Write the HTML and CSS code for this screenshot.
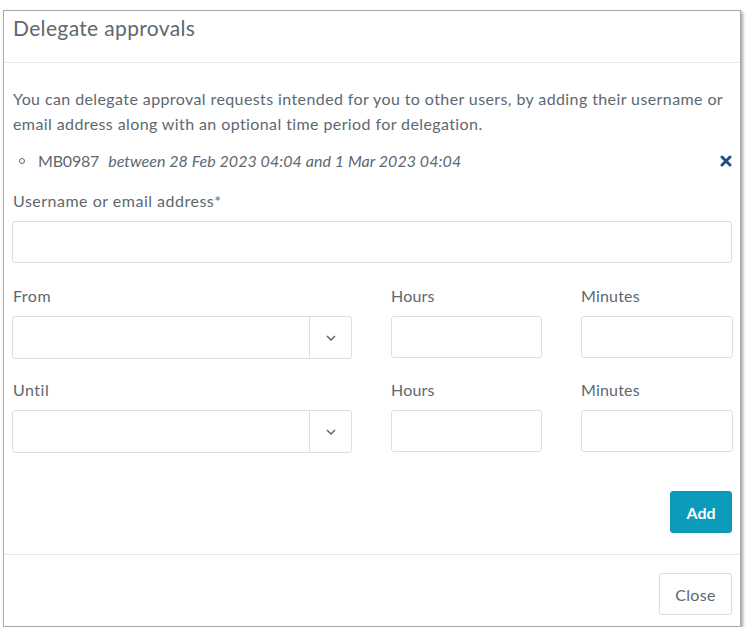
FILE: index.html
```html
<!DOCTYPE html>
<html lang="en">
<head>
<meta charset="utf-8">
<title>Delegate approvals</title>
<link rel="stylesheet" href="styles.css">
</head>
<body>
<div class="dialog">
  <div class="dialog-header">
    <h1 class="dialog-title">Delegate approvals</h1>
  </div>
  <div class="dialog-body">
    <p class="intro">You can delegate approval requests intended for you to other users, by adding their username or email address along with an optional time period for delegation.</p>
    <ul class="delegates">
      <li class="delegate">
        <span class="bullet"></span>
        <span class="user">MB0987</span>
        <em class="period">between 28 Feb 2023 04:04 and 1 Mar 2023 04:04</em>
        <button class="remove" type="button" aria-label="Remove">
          <svg width="12" height="12" viewBox="0 0 12 12"><path d="M2 2 L10 10 M10 2 L2 10" stroke="#1d4f8a" stroke-width="3" stroke-linecap="round"/></svg>
        </button>
      </li>
    </ul>
    <label class="label">Username or email address*</label>
    <input class="field" type="text">

    <div class="time-grid">
      <label class="label">From</label>
      <label class="label label-col">Hours</label>
      <label class="label label-col">Minutes</label>
      <div class="select">
        <div class="select-value"></div>
        <div class="select-toggle">
          <svg width="10" height="6" viewBox="0 0 10 6"><path d="M1 1 L5 5 L9 1" fill="none" stroke="#5d6870" stroke-width="1.5"/></svg>
        </div>
      </div>
      <input class="field" type="text">
      <input class="field" type="text">

      <label class="label">Until</label>
      <label class="label label-col">Hours</label>
      <label class="label label-col">Minutes</label>
      <div class="select">
        <div class="select-value"></div>
        <div class="select-toggle">
          <svg width="10" height="6" viewBox="0 0 10 6"><path d="M1 1 L5 5 L9 1" fill="none" stroke="#5d6870" stroke-width="1.5"/></svg>
        </div>
      </div>
      <input class="field" type="text">
      <input class="field" type="text">
    </div>

    <div class="actions">
      <button class="btn btn-primary" type="button">Add</button>
    </div>
  </div>
  <div class="dialog-footer">
    <button class="btn btn-default" type="button">Close</button>
  </div>
</div>
</body>
</html>
```

FILE: styles.css
```css
* { box-sizing: border-box; }

html, body {
  margin: 0;
  padding: 0;
  background: #ffffff;
}

body {
  font-family: "Lato", "Noto Sans", sans-serif;
  font-size: 16px;
  line-height: 25px;
  color: #5d6870;
}

.dialog {
  margin: 10px 0 0 3px;
  width: 738px;
  height: 617px;
  background: #fff;
  border: 1px solid #a9a9a9;
  box-shadow: 2px 2px 3px rgba(0,0,0,0.35);
  display: flex;
  flex-direction: column;
}

.dialog-header {
  height: 52px;
  padding: 3px 9px 0;
  border-bottom: 1px solid #e6e6e6;
}

.dialog-title {
  margin: 0;
  font-size: 21px;
  font-weight: 400;
  line-height: 28px;
  letter-spacing: 0.35px;
  color: #5d6870;
}

.dialog-body {
  padding: 23px 8px 0;
  flex: 1;
  border-bottom: 1px solid #e6e6e6;
}

.intro {
  margin: 0 -10px 12px 0;
  padding-left: 1px;
  letter-spacing: 0.4px;
}

.delegates {
  list-style: none;
  margin: 0 0 15px;
  padding: 0;
}

.delegate {
  display: flex;
  align-items: center;
  height: 25px;
}

.bullet {
  width: 6px;
  height: 6px;
  border: 1px solid #5d6870;
  border-radius: 50%;
  margin: 0 13px 0 7px;
}

.user {
  margin-right: 9px;
  letter-spacing: -0.2px;
}

.period {
  flex: 1;
  letter-spacing: 0.05px;
}

.remove {
  border: 0;
  background: none;
  padding: 0;
  margin-right: 0;
  width: 12px;
  height: 12px;
  display: flex;
}

.label {
  display: block;
  padding-left: 1px;
  letter-spacing: 0.5px;
}

.label-col {
  padding-left: 0;
  letter-spacing: 0.2px;
}

.field {
  display: block;
  width: 100%;
  height: 42px;
  margin: 8px 0 0;
  border: 1px solid #d9e0e4;
  border-radius: 3px;
  background: #fff;
  font: inherit;
}

.time-grid {
  display: grid;
  grid-template-columns: 340px 151px 152px;
  column-gap: 39px;
  margin-top: 20px;
}

.time-grid .field {
  margin-bottom: 19px;
}

.select {
  display: flex;
  height: 43px;
  margin-top: 8px;
  margin-bottom: 18px;
  border: 1px solid #d9e0e4;
  border-radius: 3px;
}

.select-value {
  flex: 1;
  border-right: 1px solid #d9e0e4;
}

.select-toggle {
  width: 41px;
  display: flex;
  align-items: center;
  justify-content: center;
}

.actions {
  display: flex;
  justify-content: flex-end;
  padding-top: 20px;
}

.btn {
  height: 42px;
  border-radius: 3px;
  font: inherit;
  padding: 0 10px;
}

.btn-primary {
  width: 62px;
  background: #0a9cba;
  border: 1px solid #0a94b1;
  color: #fff;
  font-weight: 700;
}

.dialog-footer {
  display: flex;
  justify-content: flex-end;
  padding: 18px 8px 11px;
}

.btn-default {
  width: 73px;
  background: #fff;
  border: 1px solid #dcdcdc;
  color: #5d6870;
  letter-spacing: 0.3px;
}
```
